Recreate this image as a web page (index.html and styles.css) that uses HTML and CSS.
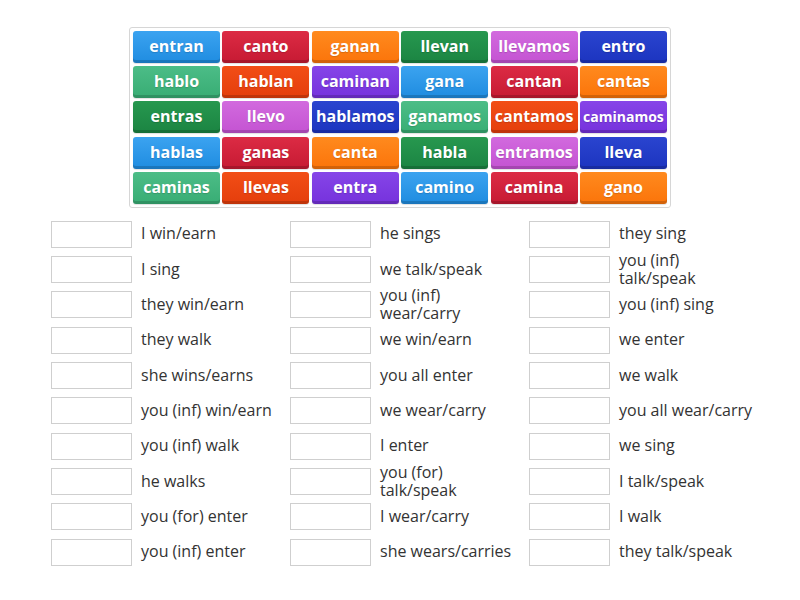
FILE: index.html
```html
<!DOCTYPE html>
<html lang="es">
<head>
<meta charset="utf-8">
<title>Match up</title>
<link rel="stylesheet" href="styles.css">
</head>
<body>
<div class="board">
  <div class="tile c1">entran</div>
  <div class="tile c2">canto</div>
  <div class="tile c3">ganan</div>
  <div class="tile c4">llevan</div>
  <div class="tile c5">llevamos</div>
  <div class="tile c6">entro</div>
  <div class="tile c7">hablo</div>
  <div class="tile c8">hablan</div>
  <div class="tile c9">caminan</div>
  <div class="tile c1">gana</div>
  <div class="tile c2">cantan</div>
  <div class="tile c3">cantas</div>
  <div class="tile c4">entras</div>
  <div class="tile c5">llevo</div>
  <div class="tile c6">hablamos</div>
  <div class="tile c7">ganamos</div>
  <div class="tile c8">cantamos</div>
  <div class="tile c9 small">caminamos</div>
  <div class="tile c1">hablas</div>
  <div class="tile c2">ganas</div>
  <div class="tile c3">canta</div>
  <div class="tile c4">habla</div>
  <div class="tile c5">entramos</div>
  <div class="tile c6">lleva</div>
  <div class="tile c7">caminas</div>
  <div class="tile c8">llevas</div>
  <div class="tile c9">entra</div>
  <div class="tile c1">camino</div>
  <div class="tile c2">camina</div>
  <div class="tile c3">gano</div>
</div>

<div class="targets">
  <div class="col">
    <div class="item"><span class="box"></span><span class="label">I win/earn</span></div>
    <div class="item"><span class="box"></span><span class="label">I sing</span></div>
    <div class="item"><span class="box"></span><span class="label">they win/earn</span></div>
    <div class="item"><span class="box"></span><span class="label">they walk</span></div>
    <div class="item"><span class="box"></span><span class="label">she wins/earns</span></div>
    <div class="item"><span class="box"></span><span class="label">you (inf) win/earn</span></div>
    <div class="item"><span class="box"></span><span class="label">you (inf) walk</span></div>
    <div class="item"><span class="box"></span><span class="label">he walks</span></div>
    <div class="item"><span class="box"></span><span class="label">you (for) enter</span></div>
    <div class="item"><span class="box"></span><span class="label">you (inf) enter</span></div>
  </div>
  <div class="col">
    <div class="item"><span class="box"></span><span class="label">he sings</span></div>
    <div class="item"><span class="box"></span><span class="label">we talk/speak</span></div>
    <div class="item"><span class="box"></span><span class="label">you (inf) wear/carry</span></div>
    <div class="item"><span class="box"></span><span class="label">we win/earn</span></div>
    <div class="item"><span class="box"></span><span class="label">you all enter</span></div>
    <div class="item"><span class="box"></span><span class="label">we wear/carry</span></div>
    <div class="item"><span class="box"></span><span class="label">I enter</span></div>
    <div class="item"><span class="box"></span><span class="label">you (for) talk/speak</span></div>
    <div class="item"><span class="box"></span><span class="label">I wear/carry</span></div>
    <div class="item"><span class="box"></span><span class="label">she wears/carries</span></div>
  </div>
  <div class="col">
    <div class="item"><span class="box"></span><span class="label">they sing</span></div>
    <div class="item"><span class="box"></span><span class="label">you (inf) talk/speak</span></div>
    <div class="item"><span class="box"></span><span class="label">you (inf) sing</span></div>
    <div class="item"><span class="box"></span><span class="label">we enter</span></div>
    <div class="item"><span class="box"></span><span class="label">we walk</span></div>
    <div class="item"><span class="box"></span><span class="label">you all wear/carry</span></div>
    <div class="item"><span class="box"></span><span class="label">we sing</span></div>
    <div class="item"><span class="box"></span><span class="label">I talk/speak</span></div>
    <div class="item"><span class="box"></span><span class="label">I walk</span></div>
    <div class="item"><span class="box"></span><span class="label">they talk/speak</span></div>
  </div>
</div>
</body>
</html>
```

FILE: styles.css
```css
html, body {
  margin: 0;
  padding: 0;
  background: #ffffff;
}

body {
  font-family: "Open Sans", "Liberation Sans", sans-serif;
  width: 800px;
  height: 600px;
  overflow: hidden;
}

.board {
  width: 534px;
  margin: 27px auto 0;
  padding: 3px;
  border: 1px solid #d6d6d6;
  border-radius: 3px;
  display: grid;
  grid-template-columns: repeat(6, 87px);
  grid-auto-rows: 32px;
  column-gap: 2.4px;
  row-gap: 3.2px;
}

.tile {
  border-radius: 3px;
  color: #ffffff;
  font-weight: 700;
  font-size: 16px;
  display: flex;
  align-items: center;
  justify-content: center;
  padding-bottom: 2px;
  box-sizing: border-box;
  text-shadow: 0 1px 1px rgba(0, 0, 0, 0.15);
  box-shadow: inset 0 -3px 0 rgba(0, 0, 0, 0.16), 0 1px 1px rgba(0, 0, 0, 0.12);
  white-space: nowrap;
}

.tile.small {
  font-size: 14px;
}

.c1 { background: linear-gradient(#3ba3f0, #1f8ce0); }
.c2 { background: linear-gradient(#dc2b44, #c61a33); }
.c3 { background: linear-gradient(#ff8a1e, #fb740a); }
.c4 { background: linear-gradient(#27984f, #1b8442); }
.c5 { background: linear-gradient(#d26ade, #c453d2); }
.c6 { background: linear-gradient(#2a44cf, #1c34bf); }
.c7 { background: linear-gradient(#4cbd87, #38ad74); }
.c8 { background: linear-gradient(#f24e16, #e43e0c); }
.c9 { background: linear-gradient(#8645e8, #7632dc); }

.targets {
  margin: 13px 0 0 51px;
  display: flex;
}

.col {
  width: 239px;
  display: flex;
  flex-direction: column;
  row-gap: 8.33px;
}

.item {
  display: flex;
  align-items: center;
  height: 27px;
  column-gap: 9px;
}

.box {
  flex: none;
  width: 79px;
  height: 25px;
  border: 1px solid #cfcfcf;
  background: #ffffff;
}

.label {
  flex: none;
  width: 136px;
  font-size: 16px;
  line-height: 18px;
  color: #333333;
  margin-top: -2px;
}
```
